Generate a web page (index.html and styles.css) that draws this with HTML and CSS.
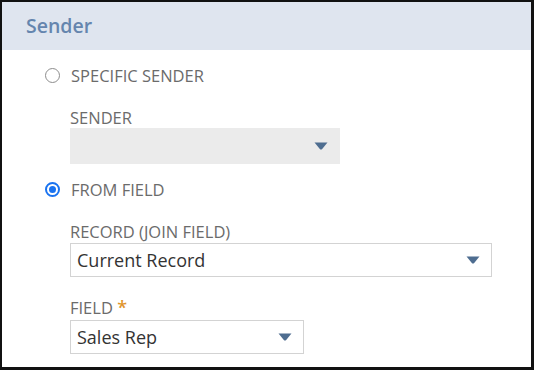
FILE: index.html
```html
<!DOCTYPE html>
<html lang="en">
<head>
    <meta charset="UTF-8">
    <title>Sender</title>
    <link rel="stylesheet" href="styles.css">
</head>
<body>
    <div class="frame">
        <div class="section-head">Sender</div>
        <div class="section-body">
            <label class="radio-row">
                <span class="radio"></span>
                <span class="radio-label">SPECIFIC SENDER</span>
            </label>
            <div class="field">
                <div class="field-label">SENDER</div>
                <div class="select select-disabled select-sender">
                    <span class="select-text"></span>
                    <svg class="arrow" width="14" height="8" viewBox="0 0 14 8"><path d="M0.5 0.5 H13.5 L8.2 7 Q7 8 5.8 7 Z" fill="#4e6d90"/></svg>
                </div>
            </div>

            <label class="radio-row radio-row-second">
                <span class="radio radio-checked"></span>
                <span class="radio-label">FROM FIELD</span>
            </label>
            <div class="field">
                <div class="field-label">RECORD (JOIN FIELD)</div>
                <div class="select select-record">
                    <span class="select-text">Current Record</span>
                    <svg class="arrow" width="14" height="8" viewBox="0 0 14 8"><path d="M0.5 0.5 H13.5 L8.2 7 Q7 8 5.8 7 Z" fill="#4e6d90"/></svg>
                </div>
            </div>
            <div class="field field-last">
                <div class="field-label">FIELD <span class="required">*</span></div>
                <div class="select select-field">
                    <span class="select-text">Sales Rep</span>
                    <svg class="arrow" width="14" height="8" viewBox="0 0 14 8"><path d="M0.5 0.5 H13.5 L8.2 7 Q7 8 5.8 7 Z" fill="#4e6d90"/></svg>
                </div>
            </div>
        </div>
    </div>
</body>
</html>
```
FILE: styles.css
```css
/* Sender block */
body {
    margin: 0;
    padding: 0;
    background: #fff;
    font-family: 'Open Sans', 'Liberation Sans', sans-serif;
}
.frame {
    width: 534px;
    height: 370px;
    box-sizing: border-box;
    border-style: solid;
    border-color: #111;
    border-width: 2px 3px 3px 2px;
    overflow: hidden;
    background: #fff;
}
.section-head {
    height: 48px;
    line-height: 47px;
    padding-left: 24px;
    background-color: #dfe5ef;
    color: #6585ae;
    font-size: 19.5px;
    font-weight: 600;
}
.section-body {
    padding: 14px 0 0 43px;
}
.radio-row {
    display: flex;
    align-items: center;
    height: 22px;
}
.radio-row-second {
    margin-top: 14px;
}
.radio {
    width: 15px;
    height: 15px;
    box-sizing: border-box;
    border: 1.5px solid #8d8d8d;
    border-radius: 50%;
    margin-right: 11px;
    position: relative;
}
.radio-checked {
    border: 2px solid #1a73f0;
}
.radio-checked::after {
    content: '';
    position: absolute;
    left: 2px;
    top: 2px;
    width: 7px;
    height: 7px;
    border-radius: 50%;
    background: #1a73f0;
}
.radio-label {
    font-size: 16.5px;
    color: #6b6b6b;
}
.field {
    padding-left: 25px;
    margin-top: 22px;
}
.field-last {
    margin-top: 20px;
}
.field-label {
    font-size: 16.5px;
    color: #6b6b6b;
    height: 20px;
    line-height: 20px;
}
.required {
    color: #e0942c;
    font-size: 18px;
    font-weight: 600;
}
.select {
    display: flex;
    align-items: center;
    justify-content: space-between;
    box-sizing: border-box;
    height: 34px;
    margin-top: 1px;
    padding: 0 11px 0 6px;
    border: 1px solid #d3d3d3;
    background: #fff;
}
.select-disabled {
    background: #ebebeb;
    border-color: #ebebeb;
    height: 36px;
    margin-top: 0;
}
.select-sender {
    width: 270px;
}
.select-record {
    width: 422px;
}
.select-field {
    width: 234px;
    margin-top: 3px;
}
.select-text {
    font-size: 18px;
    color: #333;
}
.arrow {
    display: block;
}
```
